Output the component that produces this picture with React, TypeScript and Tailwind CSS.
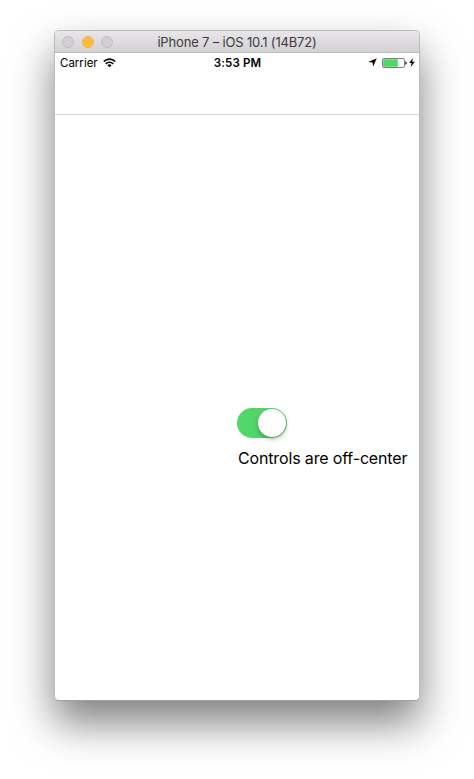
import { useState } from "react";

function WifiIcon() {
  return (
    <svg width="13" height="10" viewBox="0 0 13 10" fill="none" stroke="#000" strokeWidth="1.7">
      <path d="M0.8 3.5a8.2 8.2 0 0 1 11.4 0" />
      <path d="M2.8 5.8a5.2 5.2 0 0 1 7.4 0" />
      <path d="M6.5 9.3L4.4 7.3a3 3 0 0 1 4.2 0z" fill="#000" stroke="none" />
    </svg>
  );
}

function LocationIcon() {
  return (
    <svg width="9" height="9" viewBox="0 0 9 9">
      <path d="M8.8 0.2L5.1 8.6L4.5 4.6L0.2 4.1z" fill="#000" />
    </svg>
  );
}

function BatteryIcon() {
  return (
    <svg width="26" height="10" viewBox="0 0 26 10">
      <rect x="0.5" y="0.5" width="22" height="9" rx="1.6" fill="#fff" stroke="#7d7d7d" />
      <rect x="1.2" y="1.2" width="14.6" height="7.6" rx="0.6" fill="#4cd964" />
      <path d="M23.4 3.2a1.9 1.9 0 0 1 0 3.6z" fill="#000" />
    </svg>
  );
}

function BoltIcon() {
  return (
    <svg width="6" height="9" viewBox="0 0 6 9">
      <path d="M3.9 0L0.2 4.9H2.6L1.7 9L5.8 3.8H3.2z" fill="#000" />
    </svg>
  );
}

export default function App() {
  const [on, setOn] = useState(true);

  return (
    <main className="h-[779px] w-[474px] overflow-hidden bg-white pl-[54px] pt-[30px] font-['Inter',sans-serif] text-black">
      <div className="flex h-[671px] w-[366px] flex-col overflow-hidden rounded-[5px] border border-[#bcbcbc] border-b-[#a0a0a0] bg-white shadow-[0_22px_42px_rgba(0,0,0,0.5)]">
        {/* Title bar */}
        <header className="grid h-[22px] shrink-0 grid-cols-[1fr_auto_1fr] items-center border-b border-[#bdbbbd] bg-linear-to-b from-[#e8e6e8] to-[#d3d1d3]">
          <div className="flex gap-[7.5px] pl-[7px]">
            <span className="size-3 rounded-full border border-[#c0bec1] bg-[#d1cfd2]" />
            <span className="size-3 rounded-full border border-[#f3b33a] bg-[#fdbc40]" />
            <span className="size-3 rounded-full border border-[#c0bec1] bg-[#d1cfd2]" />
          </div>
          <h1 className="pt-0.5 text-[13px] leading-none tracking-[-0.17px] text-[#3d3b3d]">iPhone 7 – iOS 10.1 (14B72)</h1>
        </header>

        {/* Status bar */}
        <div className="grid h-[19px] shrink-0 grid-cols-3 items-center pl-[5px] pr-1">
          <div className="flex items-center gap-[5px]">
            <span className="pt-[2.5px] text-[11.5px] leading-none">Carrier</span>
            <WifiIcon />
          </div>
          <span className="pt-[2.5px] text-center text-[11.5px] leading-none font-semibold tracking-[0.15px]">3:53 PM</span>
          <div className="flex items-center justify-end">
            <LocationIcon />
            <span className="ml-[5px] flex">
              <BatteryIcon />
            </span>
            <span className="ml-px flex">
              <BoltIcon />
            </span>
          </div>
        </div>

        {/* Empty navigation bar */}
        <nav className="h-[43px] shrink-0 border-b border-[#d6d6d6]" />

        <section className="flex flex-1 flex-col items-start pl-[182px] pt-[293px]">
          <button
            role="switch"
            aria-checked={on}
            aria-label="Toggle"
            onClick={() => setOn(!on)}
            className={`flex h-[30px] w-[50px] items-center rounded-full p-px ${on ? "justify-end bg-[#53d669]" : "justify-start bg-gray-200"}`}
          >
            <span className="size-7 rounded-full bg-white shadow-[0_2px_4px_rgba(0,0,0,0.3)]" />
          </button>
          <p className="mt-3 pl-px text-[16px] leading-4 tracking-[-0.15px] whitespace-nowrap">Controls are off-center</p>
        </section>
      </div>
    </main>
  );
}
